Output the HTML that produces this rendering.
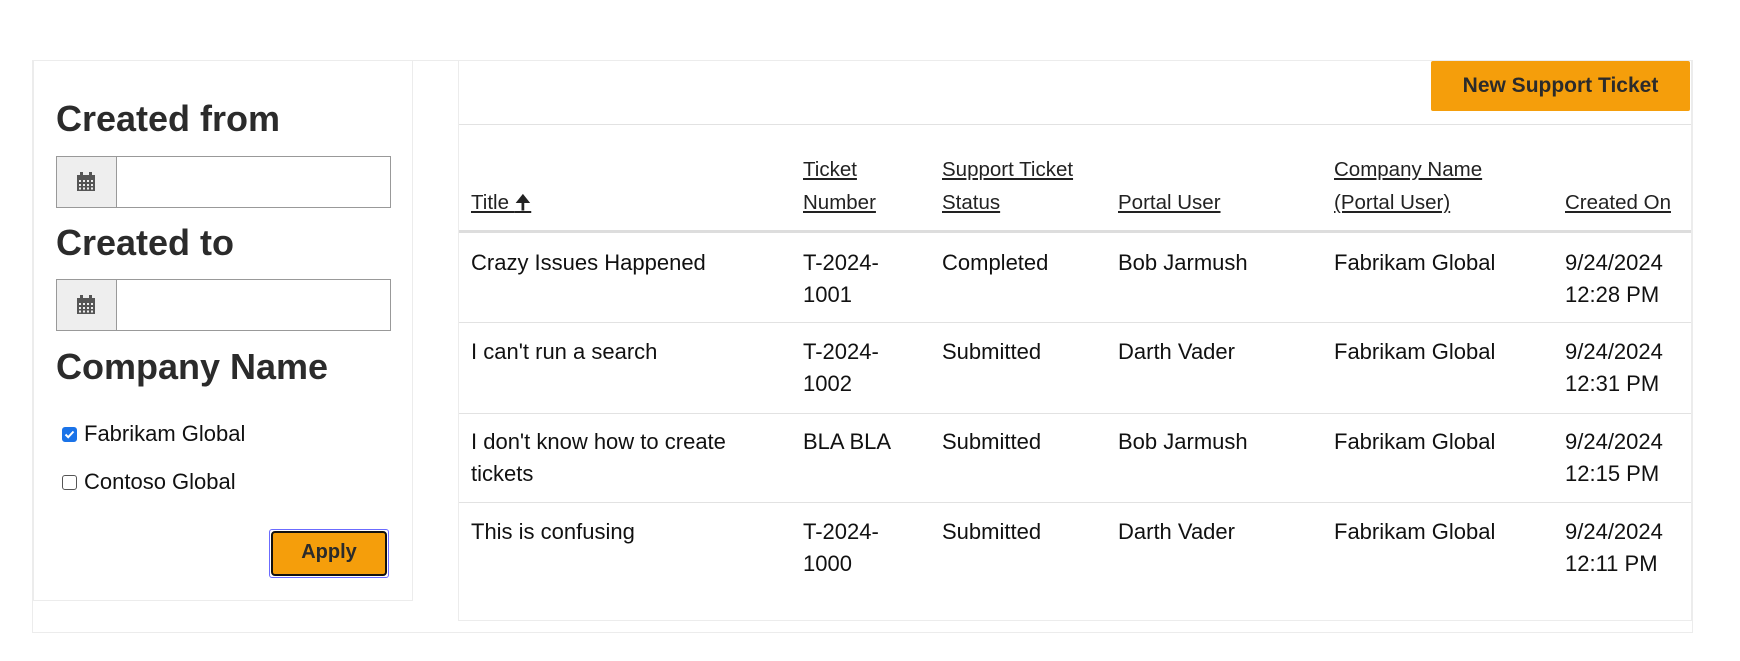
<!DOCTYPE html>
<html><head><meta charset="utf-8"><style>
body{margin:0;width:1740px;height:661px;background:#fff;font-family:"Liberation Sans",sans-serif;color:#222;position:relative;overflow:hidden}
.a{position:absolute}
.box{border:1px solid #ececec;box-sizing:border-box}
h2{margin:0;font-size:36px;font-weight:bold;color:#2b2b2b;position:absolute;left:56px;line-height:40px}
.ig{position:absolute;left:56px;width:335px;height:52px;border:1px solid #999;box-sizing:border-box;background:#fff}
.ig .ad{position:absolute;left:0;top:0;width:59px;height:50px;background:#eee;border-right:1px solid #999}
.ig svg{position:absolute;left:19px;top:15px}
.cb{position:absolute;left:62px;font-size:22px;color:#111}
.cb i{display:inline-block;width:15px;height:15px;border:1px solid #555;border-radius:3px;vertical-align:-1px;margin-right:7px;box-sizing:border-box;background:#fff}
.cb i.on{background:#1a73e8;border-color:#1a73e8;position:relative}
.th{position:absolute;font-size:20.5px;text-decoration:underline;color:#222;line-height:33px}
.td{position:absolute;font-size:22px;line-height:32px;color:#111}
.hr{position:absolute;left:459px;width:1232px;height:1px;background:#e2e2e2}
</style></head><body>
<div class="a box" style="left:32px;top:60px;width:1661px;height:573px"></div>
<div class="a box" style="left:33px;top:60px;width:380px;height:541px"></div>
<div class="a box" style="left:458px;top:60px;width:1234px;height:561px"></div>

<h2 style="top:99px">Created from</h2>
<div class="ig" style="top:156px"><div class="ad"><svg width="20" height="20" viewBox="0 0 20 20"><rect x="1" y="3" width="18" height="16" fill="#555"/><rect x="4" y="0" width="3" height="5" fill="#555"/><rect x="13" y="0" width="3" height="5" fill="#555"/><g fill="#eee"><rect x="3" y="8" width="2" height="2"/><rect x="7" y="8" width="2" height="2"/><rect x="11" y="8" width="2" height="2"/><rect x="15" y="8" width="2" height="2"/><rect x="3" y="12" width="2" height="2"/><rect x="7" y="12" width="2" height="2"/><rect x="11" y="12" width="2" height="2"/><rect x="15" y="12" width="2" height="2"/><rect x="3" y="15.5" width="2" height="2"/><rect x="7" y="15.5" width="2" height="2"/><rect x="11" y="15.5" width="2" height="2"/><rect x="15" y="15.5" width="2" height="2"/></g></svg></div></div>
<h2 style="top:223px">Created to</h2>
<div class="ig" style="top:279px"><div class="ad"><svg width="20" height="20" viewBox="0 0 20 20"><rect x="1" y="3" width="18" height="16" fill="#555"/><rect x="4" y="0" width="3" height="5" fill="#555"/><rect x="13" y="0" width="3" height="5" fill="#555"/><g fill="#eee"><rect x="3" y="8" width="2" height="2"/><rect x="7" y="8" width="2" height="2"/><rect x="11" y="8" width="2" height="2"/><rect x="15" y="8" width="2" height="2"/><rect x="3" y="12" width="2" height="2"/><rect x="7" y="12" width="2" height="2"/><rect x="11" y="12" width="2" height="2"/><rect x="15" y="12" width="2" height="2"/><rect x="3" y="15.5" width="2" height="2"/><rect x="7" y="15.5" width="2" height="2"/><rect x="11" y="15.5" width="2" height="2"/><rect x="15" y="15.5" width="2" height="2"/></g></svg></div></div>
<h2 style="top:347px">Company Name</h2>
<div class="cb" style="top:421px"><i class="on"><svg width="13" height="13" viewBox="0 0 13 13" style="position:absolute;left:0;top:0"><path d="M2.5 6.5 L5.2 9.2 L10.5 3.5" stroke="#fff" stroke-width="2" fill="none"/></svg></i>Fabrikam Global</div>
<div class="cb" style="top:469px"><i></i>Contoso Global</div>
<div class="a" style="left:269px;top:529px;width:120px;height:49px;border:1px solid #6b6bff;border-radius:3px;box-sizing:border-box;padding:1px"><div style="width:100%;height:100%;background:#f59e0b;border:2px solid #111;border-radius:4px;box-sizing:border-box;text-align:center;font-weight:bold;font-size:20px;line-height:38px;color:#2b2b2b">Apply</div></div>

<div class="a" style="left:1440px;top:61px;width:259px;height:50px;background:#f59e0b;border-radius:2px;text-align:center;font-weight:bold;font-size:21px;line-height:50px;color:#2b2b2b;margin-left:-9px">New Support Ticket</div>
<div class="hr" style="top:124px"></div>

<div class="th" style="left:471px;top:186px">Title <span style="font-size:20px">🠉</span></div>
<div class="th" style="left:803px;top:153px">Ticket<br>Number</div>
<div class="th" style="left:942px;top:153px">Support Ticket<br>Status</div>
<div class="th" style="left:1118px;top:186px">Portal User</div>
<div class="th" style="left:1334px;top:153px">Company Name<br>(Portal User)</div>
<div class="th" style="left:1565px;top:186px">Created On</div>
<div class="a" style="left:459px;top:230px;width:1232px;height:3px;background:#ddd"></div>

<div class="td" style="left:471px;top:247px">Crazy Issues Happened</div>
<div class="td" style="left:803px;top:247px">T-2024-<br>1001</div>
<div class="td" style="left:942px;top:247px">Completed</div>
<div class="td" style="left:1118px;top:247px">Bob Jarmush</div>
<div class="td" style="left:1334px;top:247px">Fabrikam Global</div>
<div class="td" style="left:1565px;top:247px">9/24/2024<br>12:28 PM</div>
<div class="hr" style="top:322px"></div>

<div class="td" style="left:471px;top:336px">I can't run a search</div>
<div class="td" style="left:803px;top:336px">T-2024-<br>1002</div>
<div class="td" style="left:942px;top:336px">Submitted</div>
<div class="td" style="left:1118px;top:336px">Darth Vader</div>
<div class="td" style="left:1334px;top:336px">Fabrikam Global</div>
<div class="td" style="left:1565px;top:336px">9/24/2024<br>12:31 PM</div>
<div class="hr" style="top:413px"></div>

<div class="td" style="left:471px;top:426px">I don't know how to create<br>tickets</div>
<div class="td" style="left:803px;top:426px">BLA BLA</div>
<div class="td" style="left:942px;top:426px">Submitted</div>
<div class="td" style="left:1118px;top:426px">Bob Jarmush</div>
<div class="td" style="left:1334px;top:426px">Fabrikam Global</div>
<div class="td" style="left:1565px;top:426px">9/24/2024<br>12:15 PM</div>
<div class="hr" style="top:502px"></div>

<div class="td" style="left:471px;top:516px">This is confusing</div>
<div class="td" style="left:803px;top:516px">T-2024-<br>1000</div>
<div class="td" style="left:942px;top:516px">Submitted</div>
<div class="td" style="left:1118px;top:516px">Darth Vader</div>
<div class="td" style="left:1334px;top:516px">Fabrikam Global</div>
<div class="td" style="left:1565px;top:516px">9/24/2024<br>12:11 PM</div>
</body></html>
